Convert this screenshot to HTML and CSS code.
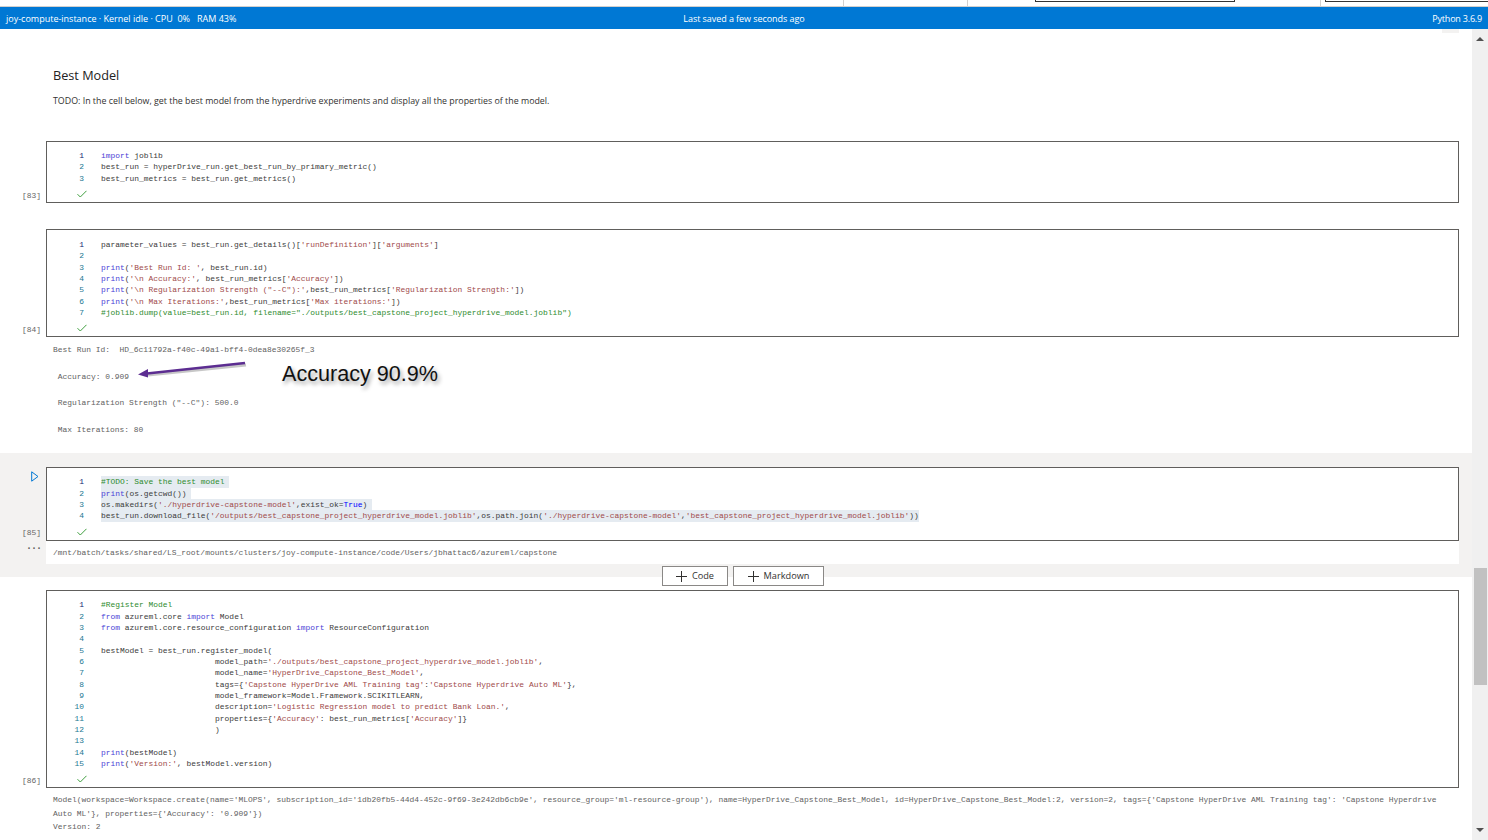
FILE: index.html
```html
<!DOCTYPE html>
<html lang="en">
<head>
<meta charset="utf-8">
<title>Notebook</title>
<link rel="stylesheet" href="styles.css">
</head>
<body>
<header class="tabstrip">
  <div class="strip strip-a"></div>
  <div class="strip strip-b"></div>
  <div class="strip strip-c"><div class="cut-box"></div></div>
  <div class="strip strip-d"><div class="cut-box cut-box-end"></div></div>
</header>
<div class="status">
  <div class="status-left">joy-compute-instance · Kernel idle · CPU &nbsp;0% &nbsp;&nbsp;RAM 43%</div>
  <div class="status-mid">Last saved a few seconds ago</div>
  <div class="status-right">Python 3.6.9</div>
</div>
<div class="workspace">
  <main class="notebook">
    <div class="sliver"></div>
    <section class="markdown">
      <h2>Best Model</h2>
      <p>TODO: In the cell below, get the best model from the hyperdrive experiments and display all the properties of the model.</p>
    </section>

    <section class="cell">
      <div class="gutter"><span class="count">[83]</span></div>
      <div class="box">
<div class="line"><span class="ln on">1</span><code><span class="k">import</span> joblib</code></div>
<div class="line"><span class="ln">2</span><code>best_run = hyperDrive_run.get_best_run_by_primary_metric()</code></div>
<div class="line"><span class="ln">3</span><code>best_run_metrics = best_run.get_metrics()</code></div>
<div class="foot"><svg class="check" viewBox="0 0 10 8"><path d="M.5 4.2 3.3 7 9.5.8"/></svg></div>
      </div>
    </section>

    <section class="cell cell-gap">
      <div class="gutter"><span class="count">[84]</span></div>
      <div class="box box-tall">
<div class="line"><span class="ln on">1</span><code>parameter_values = best_run.get_details()[<span class="s">'runDefinition'</span>][<span class="s">'arguments'</span>]</code></div>
<div class="line"><span class="ln">2</span><code></code></div>
<div class="line"><span class="ln">3</span><code><span class="k">print</span>(<span class="s">'Best Run Id: '</span>, best_run.id)</code></div>
<div class="line"><span class="ln">4</span><code><span class="k">print</span>(<span class="s">'\n Accuracy:'</span>, best_run_metrics[<span class="s">'Accuracy'</span>])</code></div>
<div class="line"><span class="ln">5</span><code><span class="k">print</span>(<span class="s">'\n Regularization Strength ("--C"):'</span>,best_run_metrics[<span class="s">'Regularization Strength:'</span>])</code></div>
<div class="line"><span class="ln">6</span><code><span class="k">print</span>(<span class="s">'\n Max Iterations:'</span>,best_run_metrics[<span class="s">'Max iterations:'</span>])</code></div>
<div class="line"><span class="ln">7</span><code><span class="c">#joblib.dump(value=best_run.id, filename="./outputs/best_capstone_project_hyperdrive_model.joblib")</span></code></div>
<div class="foot"><svg class="check" viewBox="0 0 10 8"><path d="M.5 4.2 3.3 7 9.5.8"/></svg></div>
      </div>
    </section>
    <section class="output annotated">
      <div class="out-line">Best Run Id:  HD_6c11792a-f40c-49a1-bff4-0dea8e30265f_3</div>
      <div class="out-line out-blank"></div>
      <div class="out-line"> Accuracy: 0.909</div>
      <div class="out-line out-blank"></div>
      <div class="out-line"> Regularization Strength ("--C"): 500.0</div>
      <div class="out-line out-blank"></div>
      <div class="out-line"> Max Iterations: 80</div>
      <svg class="arrow" viewBox="0 0 112 18"><path class="arrow-shadow" d="M10 14 108 4"/><path class="arrow-line" d="M9 12.5 107 2"/><path class="arrow-head" d="M0 13.5 10 8 10 16.5Z"/></svg>
      <div class="callout">Accuracy 90.9%</div>
    </section>

    <section class="band">
      <div class="cell">
        <div class="gutter gutter-run">
          <svg class="run" viewBox="0 0 8 11"><path d="M.7.8 7 5.5.7 10.2Z"/></svg>
          <span class="count">[85]</span>
        </div>
        <div class="box">
<div class="line"><span class="ln on">1</span><code class="sel"><span class="c">#TODO: Save the best model</span> </code></div>
<div class="line"><span class="ln">2</span><code class="sel"><span class="k">print</span>(os.getcwd()) </code></div>
<div class="line"><span class="ln">3</span><code class="sel">os.makedirs(<span class="s">'./hyperdrive-capstone-model'</span>,exist_ok=<span class="b">True</span>) </code></div>
<div class="line"><span class="ln">4</span><code class="sel">best_run.download_file(<span class="s">'/outputs/best_capstone_project_hyperdrive_model.joblib'</span>,os.path.join(<span class="s">'./hyperdrive-capstone-model'</span>,<span class="s">'best_capstone_project_hyperdrive_model.joblib'</span>))</code></div>
<div class="foot"><svg class="check" viewBox="0 0 10 8"><path d="M.5 4.2 3.3 7 9.5.8"/></svg></div>
        </div>
      </div>
      <div class="cell">
        <div class="gutter gutter-more"><span class="dots">···</span></div>
        <div class="out-white"><div class="out-line">/mnt/batch/tasks/shared/LS_root/mounts/clusters/joy-compute-instance/code/Users/jbhattac6/azureml/capstone</div></div>
      </div>
      <div class="inserter">
        <button class="add add-code"><svg class="plus" viewBox="0 0 11 11"><path d="M5.5 0v11M0 5.5h11"/></svg>Code</button>
        <button class="add add-md"><svg class="plus" viewBox="0 0 11 11"><path d="M5.5 0v11M0 5.5h11"/></svg>Markdown</button>
      </div>
    </section>

    <section class="cell cell-last">
      <div class="gutter"><span class="count">[86]</span></div>
      <div class="box">
<div class="line"><span class="ln on">1</span><code><span class="c">#Register Model</span></code></div>
<div class="line"><span class="ln">2</span><code><span class="k">from</span> azureml.core <span class="k">import</span> Model</code></div>
<div class="line"><span class="ln">3</span><code><span class="k">from</span> azureml.core.resource_configuration <span class="k">import</span> ResourceConfiguration</code></div>
<div class="line"><span class="ln">4</span><code></code></div>
<div class="line"><span class="ln">5</span><code>bestModel = best_run.register_model(</code></div>
<div class="line"><span class="ln">6</span><code>                        model_path=<span class="s">'./outputs/best_capstone_project_hyperdrive_model.joblib'</span>,</code></div>
<div class="line"><span class="ln">7</span><code>                        model_name=<span class="s">'HyperDrive_Capstone_Best_Model'</span>,</code></div>
<div class="line"><span class="ln">8</span><code>                        tags={<span class="s">'Capstone HyperDrive AML Training tag'</span>:<span class="s">'Capstone Hyperdrive Auto ML'</span>},</code></div>
<div class="line"><span class="ln">9</span><code>                        model_framework=Model.Framework.SCIKITLEARN,</code></div>
<div class="line"><span class="ln">10</span><code>                        description=<span class="s">'Logistic Regression model to predict Bank Loan.'</span>,</code></div>
<div class="line"><span class="ln">11</span><code>                        properties={<span class="s">'Accuracy'</span>: best_run_metrics[<span class="s">'Accuracy'</span>]}</code></div>
<div class="line"><span class="ln">12</span><code>                        )</code></div>
<div class="line"><span class="ln">13</span><code></code></div>
<div class="line"><span class="ln">14</span><code><span class="k">print</span>(bestModel)</code></div>
<div class="line"><span class="ln">15</span><code><span class="k">print</span>(<span class="s">'Version:'</span>, bestModel.version)</code></div>
<div class="foot"><svg class="check" viewBox="0 0 10 8"><path d="M.5 4.2 3.3 7 9.5.8"/></svg></div>
      </div>
    </section>
    <section class="output output-last">
      <div class="out-line">Model(workspace=Workspace.create(name='MLOPS', subscription_id='1db20fb5-44d4-452c-9f69-3e242db6cb9e', resource_group='ml-resource-group'), name=HyperDrive_Capstone_Best_Model, id=HyperDrive_Capstone_Best_Model:2, version=2, tags={'Capstone HyperDrive AML Training tag': 'Capstone Hyperdrive</div>
      <div class="out-line">Auto ML'}, properties={'Accuracy': '0.909'})</div>
      <div class="out-line">Version: 2</div>
    </section>
  </main>
  <aside class="scrollbar">
    <div class="arrow-btn"><span class="tri-up"></span></div>
    <div class="track"><div class="thumb"></div></div>
    <div class="arrow-btn"><span class="tri-down"></span></div>
  </aside>
</div>
</body>
</html>
```

FILE: styles.css
```css
* { box-sizing: border-box; }
html, body { margin: 0; height: 840px; overflow: hidden; background: #fff; }
body { font-family: "Open Sans", "Noto Sans", sans-serif; color: #323130; }

.tabstrip { height: 7px; display: flex; border-bottom: 1px solid #d2d0ce; background: #fff; overflow: hidden; }
.strip { flex: none; height: 6px; }
.strip-a { width: 843px; }
.strip-b { width: 124px; border-left: 1px solid #d2d0ce; }
.strip-c { width: 353px; border-left: 1px solid #d2d0ce; padding-left: 67px; }
.strip-d { width: 168px; border-left: 1px solid #d2d0ce; padding-left: 4px; }
.cut-box { width: 200px; height: 2px; background: #fff; border: 1px solid #333; border-top: 0; }
.cut-box-end { width: 200px; }

.status { height: 22px; background: #0078d4; color: #fff; font-size: 9px; letter-spacing: -.06px; display: flex; align-items: center; justify-content: space-between; padding: 0 6px; }
.status-left { width: 400px; letter-spacing: 0; }
.status-right { width: 400px; text-align: right; letter-spacing: -.2px; }

.workspace { height: 811px; display: flex; overflow: hidden; }
.notebook { width: 1472px; flex: none; overflow: hidden; }
.sliver { width: 17px; height: 4px; margin-left: 1442px; background: #f3f2f1; }

.markdown { padding: 34px 0 0 53px; height: 108px; }
.markdown h2 { margin: 0; font-size: 12.7px; line-height: 16px; font-weight: 400; color: #222; }
.markdown p { margin: 10.5px 0 0; font-size: 8.85px; line-height: 14px; color: #323130; }

.cell { display: flex; margin-right: 13px; }
.cell-gap { margin-top: 26px; }
.cell-last { margin-top: 13px; }
.gutter { width: 46px; flex: none; display: flex; flex-direction: column; justify-content: flex-end; align-items: flex-end; padding: 0 5px 2px 0; }
.count { font: 7.93px/11px "Liberation Mono", monospace; color: #666; }
.gutter-run { justify-content: space-between; padding: 4px 5px 3px 0; }
.run { width: 8px; height: 11px; margin-right: 2px; fill: none; stroke: #0078d4; stroke-width: 1; }
.gutter-more { justify-content: flex-start; }
.dots { font: 700 10px/10px "Liberation Mono", monospace; color: #605e5c; letter-spacing: -1px; padding-top: 3px; }

.box { flex: 1; min-width: 0; background: #fff; border: 1px solid #605e5c; padding-top: 8px; }
.box-tall { padding-top: 9px; }
.line { display: flex; height: 11.33px; font: 7.93px/11.33px "Liberation Mono", monospace; color: #3b3b3b; white-space: pre; }
.ln { width: 37px; flex: none; margin-right: 17px; text-align: right; color: #237893; }
.ln.on { color: #0b216f; }
.line code { font: inherit; }
.k { color: #4b3fd6; }
.s { color: #a04a4a; }
.c { color: #2e8b2e; }
.b { color: #0000ff; }
.sel { background: #e5ebf1; }
.foot { height: 18px; padding: 6px 0 0 30px; }
.check { display: block; width: 10px; height: 8px; fill: none; stroke: #3f9f3f; stroke-width: 1; }

.output { padding: 6px 0 0 53px; height: 116px; font: 7.93px/13.3px "Liberation Mono", monospace; color: #616161; }
.out-line { width: fit-content; min-height: 13.3px; white-space: pre; }
.annotated { position: relative; }
.arrow { position: absolute; left: 138px; top: 24px; width: 112px; height: 18px; overflow: visible; }
.arrow-line { stroke: #5c2d91; stroke-width: 2.6; fill: none; }
.arrow-shadow { stroke: rgba(0,0,0,.22); stroke-width: 3; fill: none; }
.arrow-head { fill: #5c2d91; }
.callout { position: absolute; left: 282px; top: 22.5px; font: 21.6px/28px "Liberation Sans", Arial, sans-serif; color: #111; white-space: nowrap; text-shadow: 2px 3px 4px rgba(0,0,0,.4); }

.band { position: relative; height: 124px; background: #f3f2f1; padding-top: 14px; }
.out-white { flex: 1; min-width: 0; height: 23px; background: #fff; padding: 5px 0 0 7px; font: 7.93px/13.3px "Liberation Mono", monospace; color: #616161; }
.inserter { position: absolute; left: 662px; top: 113px; display: flex; gap: 5px; }
.add { height: 20px; padding: 0; background: #fff; border: 1px solid #8a8886; font: 9.2px/18px "Open Sans", sans-serif; color: #323130; display: flex; align-items: center; justify-content: center; gap: 5px; }
.add-code { width: 66px; }
.add-md { width: 91px; }
.plus { width: 11px; height: 11px; fill: none; stroke: #323130; stroke-width: 1; }

.output-last { height: 60px; padding-top: 5px; line-height: 13.4px; }

.scrollbar { flex: 1; background: #f0f0f0; display: flex; flex-direction: column; }
.arrow-btn { height: 17px; flex: none; display: flex; align-items: center; justify-content: center; }
.tri-up { border: 4px solid transparent; border-top: 0; border-bottom: 4px solid #505050; margin-top: 2px; }
.tri-down { border: 4px solid transparent; border-bottom: 0; border-top: 4px solid #505050; margin-bottom: 3px; }
.track { flex: 1; padding: 522px 1px 0 2px; }
.thumb { height: 117px; background: #c1c1c1; }
```
